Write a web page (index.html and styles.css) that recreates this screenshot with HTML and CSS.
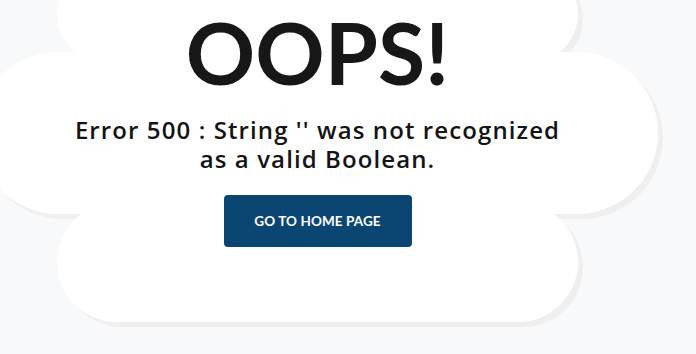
FILE: index.html
```html
<!DOCTYPE html>
<html lang="en">
<head>
<meta charset="utf-8">
<title>Oops</title>
<link rel="stylesheet" href="styles.css">
</head>
<body>
<main class="scene">
  <section class="cloud">
    <div class="cloud-shapes" aria-hidden="true">
      <div class="blob blob-top"></div>
      <div class="blob blob-mid"></div>
      <div class="blob blob-bot"></div>
    </div>
    <div class="content">
      <h1 class="title">OOPS!</h1>
      <p class="message"><span class="line">Error 500 : String '' was not recognized</span><span class="line">as a valid Boolean.</span></p>
      <a class="home-btn" href="#">GO TO HOME PAGE</a>
    </div>
  </section>
</main>
</body>
</html>
```

FILE: styles.css
```css
* { box-sizing: border-box; }
html, body { margin: 0; padding: 0; }
body {
  background: #f8f9fb;
  font-family: Lato, "Noto Sans", sans-serif;
  color: #141414;
}
.scene {
  width: 696px;
  height: 354px;
  overflow: hidden;
}
.cloud {
  position: relative;
  width: 521px;
  height: 354px;
  margin-left: 57px;
}
.cloud-shapes {
  position: absolute;
  inset: 0;
  filter: drop-shadow(5px 5px 0 #efefef);
}
.blob {
  position: absolute;
  background: #ffffff;
}
.blob-top {
  left: 0;
  top: -34px;
  width: 521px;
  height: 96px;
  border-radius: 48px;
}
.blob-mid {
  left: -80px;
  top: 52px;
  width: 681px;
  height: 162px;
  border-radius: 81px;
}
.blob-bot {
  left: 0;
  top: 202px;
  width: 521px;
  height: 120px;
  border-radius: 60px;
}
.content {
  position: relative;
  display: flex;
  flex-direction: column;
  align-items: center;
  padding-top: 9px;
}
.title {
  margin: 0;
  font-size: 86px;
  line-height: 86px;
  font-weight: 700;
  color: #171717;
}
.message {
  margin: 20px 0 0;
  display: flex;
  flex-direction: column;
  align-items: center;
  font-family: "Open Sans", Lato, sans-serif;
  font-size: 24px;
  line-height: 29px;
  font-weight: 600;
  letter-spacing: 1.1px;
  white-space: nowrap;
  color: #141414;
}
.home-btn {
  margin-top: 22px;
  height: 52px;
  width: 188px;
  display: flex;
  align-items: center;
  justify-content: center;
  background: #0b4673;
  border-radius: 4px;
  color: #ffffff;
  text-decoration: none;
  font-size: 13.5px;
  font-weight: 700;
  letter-spacing: 0.1px;
}
```
